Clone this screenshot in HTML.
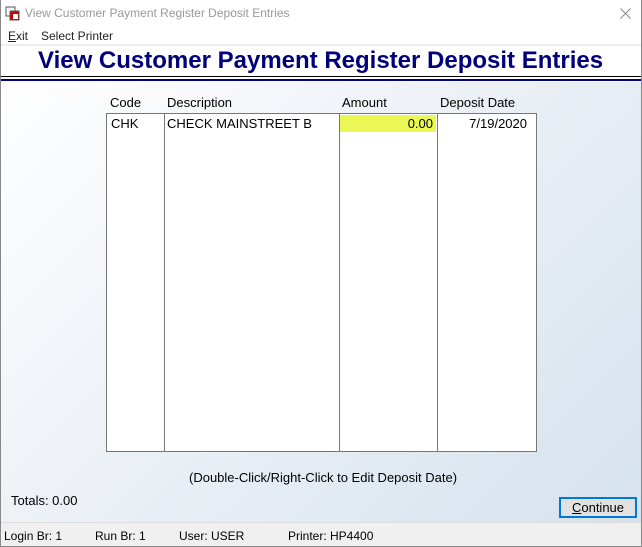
<!DOCTYPE html>
<html><head><style>
*{margin:0;padding:0;box-sizing:border-box}
body{width:642px;height:547px;overflow:hidden;font-family:"Liberation Sans",sans-serif;font-size:12px;color:#000;position:relative;background:#fff}
.win{position:absolute;left:0;top:0;width:642px;height:547px;border:1px solid #888;border-top:none}
.abs{position:absolute;white-space:nowrap}
.body{position:absolute;left:1px;top:82px;width:640px;height:440px;background:linear-gradient(135deg,#ffffff 0%,#eef2f7 40%,#d6e2ee 100%)}
.tbl{position:absolute;left:106px;top:113px;width:431px;height:339px;border:1px solid #777;background:#fff;font-size:13px}
.col{position:absolute;top:0;bottom:0;border-left:1px solid #777}
</style></head><body>
<div class="win"></div>
<svg class="abs" style="left:5px;top:6px" width="16" height="16"><rect x="1" y="1" width="9" height="9" fill="#fff" stroke="#555"/><rect x="5" y="5" width="9" height="9" fill="#c00" stroke="#555"/><rect x="8" y="8" width="5" height="5" fill="#fff"/></svg>
<div class="abs" style="left:25px;top:6px;font-size:12px;color:#999">View Customer Payment Register Deposit Entries</div>
<svg class="abs" style="left:620px;top:8px" width="11" height="11"><path d="M0.5 0.5L10.5 10.5M10.5 0.5L0.5 10.5" stroke="#888" stroke-width="1"/></svg>
<div class="abs" style="left:8px;top:29px;color:#222"><u>E</u>xit</div>
<div class="abs" style="left:41px;top:29px;color:#222">Select Printer</div>
<div class="abs" style="left:1px;top:44px;width:640px;height:2px;background:#eee"></div>
<div class="abs" style="left:38px;top:47px;font-size:24px;font-weight:bold;color:#00007a">View Customer Payment Register Deposit Entries</div>
<div class="abs" style="left:1px;top:76px;width:640px;height:1px;background:#000"></div>
<div class="abs" style="left:1px;top:79px;width:640px;height:2px;background:#000080"></div>
<div class="body"></div>
<div class="abs" style="left:110px;top:95px;font-size:13px">Code</div>
<div class="abs" style="left:167px;top:95px;font-size:13px">Description</div>
<div class="abs" style="left:342px;top:95px;font-size:13px">Amount</div>
<div class="abs" style="left:440px;top:95px;font-size:13px">Deposit Date</div>
<div class="tbl">
<div class="col" style="left:57px"></div>
<div class="col" style="left:232px"></div>
<div class="col" style="left:330px"></div>
<div class="abs" style="left:233px;top:1px;width:96px;height:17px;background:#eaf755"></div>
<div class="abs" style="left:4px;top:2px">CHK</div>
<div class="abs" style="left:60px;top:2px">CHECK MAINSTREET B</div>
<div class="abs" style="left:234px;top:2px;width:92px;text-align:right">0.00</div>
<div class="abs" style="left:332px;top:2px;width:88px;text-align:right">7/19/2020</div>
</div>
<div class="abs" style="left:189px;top:470px;font-size:13px">(Double-Click/Right-Click to Edit Deposit Date)</div>
<div class="abs" style="left:11px;top:493px;font-size:13px">Totals: 0.00</div>
<div class="abs" style="left:559px;top:497px;width:78px;height:21px;border:2px solid #0078d7;background:#e1e1e1;text-align:center;line-height:17px;font-size:13px"><u>C</u>ontinue</div>
<div class="abs" style="left:1px;top:522px;width:640px;height:24px;background:#f0f0f0;border-top:1px solid #ddd"></div>
<div class="abs" style="left:4px;top:529px">Login Br: 1</div>
<div class="abs" style="left:95px;top:529px">Run Br: 1</div>
<div class="abs" style="left:179px;top:529px">User: USER</div>
<div class="abs" style="left:288px;top:529px">Printer: HP4400</div>
</body></html>
